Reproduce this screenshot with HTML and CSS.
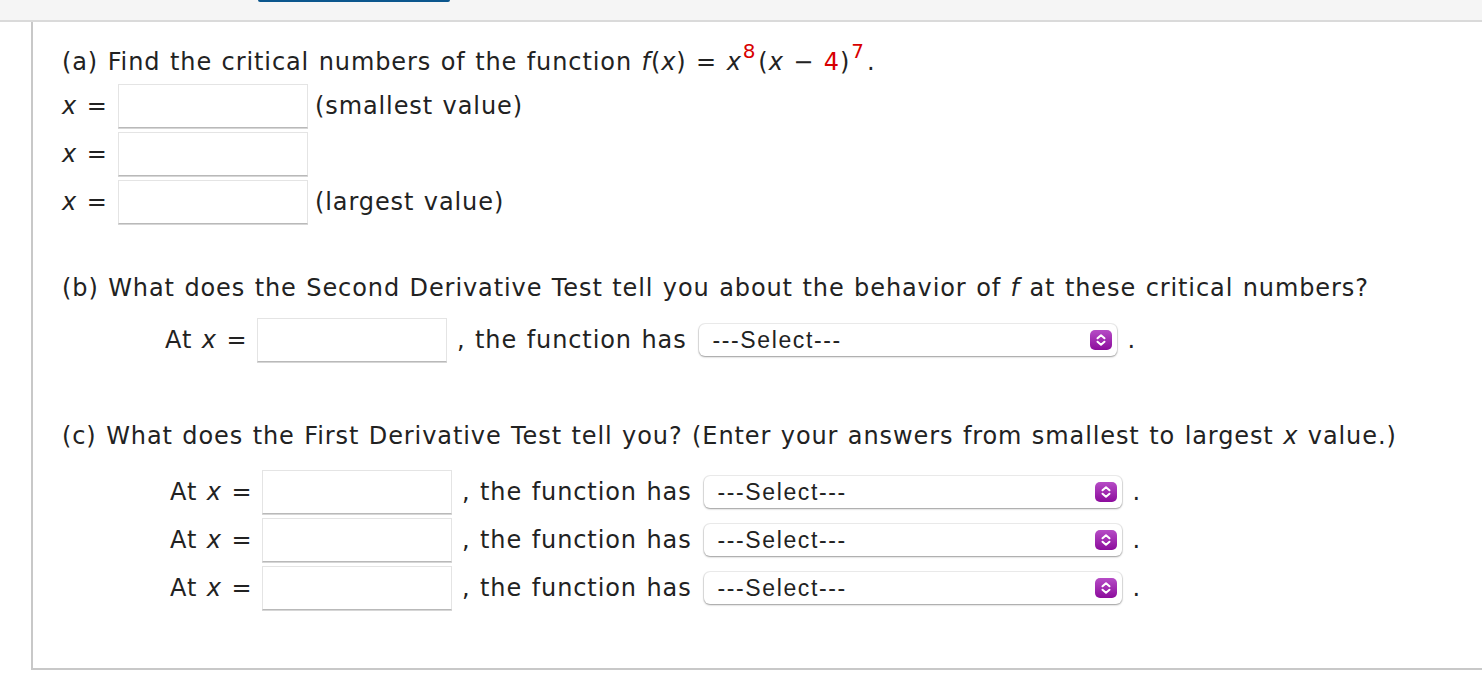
FILE: index.html
```html
<!DOCTYPE html>
<html lang="en">
<head>
<meta charset="utf-8">
<title>Critical numbers</title>
<link rel="stylesheet" href="styles.css">
</head>
<body>
<div class="topbar"><div class="tab"></div></div>
<div class="panel">
  <p class="q">(a) Find the critical numbers of the function <i>f</i>(<i>x</i>) = <i>x</i><sup class="red">8</sup>(<i>x</i> &minus; <span class="red">4</span>)<sup class="red">7</sup>.</p>
  <div class="rows-a">
    <div class="row"><span class="lbl"><i>x</i> =</span><input class="ans" type="text"><span class="note">(smallest value)</span></div>
    <div class="row"><span class="lbl"><i>x</i> =</span><input class="ans" type="text"></div>
    <div class="row"><span class="lbl"><i>x</i> =</span><input class="ans" type="text"><span class="note">(largest value)</span></div>
  </div>

  <p class="q q-b">(b) What does the Second Derivative Test tell you about the behavior of <i>f</i> at these critical numbers?</p>
  <div class="rows-b">
    <div class="row"><span class="at">At <i>x</i> =</span><input class="ans" type="text"><span class="has">, the function has</span><div class="sel"><span>---Select---</span><svg class="arr" width="22" height="20" viewBox="0 0 22 20"><defs><linearGradient id="g1" x1="0" y1="0" x2="0" y2="1"><stop offset="0" stop-color="#b64cc6"/><stop offset="1" stop-color="#8c0c9c"/></linearGradient></defs><rect x="0" y="0" width="22" height="20" rx="5" fill="url(#g1)"/><path d="M7.5 8.3 L11 5.2 L14.5 8.3 M7.5 11.7 L11 14.8 L14.5 11.7" fill="none" stroke="#fff" stroke-width="2" stroke-linecap="round" stroke-linejoin="round"/></svg></div><span class="dot">.</span></div>
  </div>

  <p class="q q-c">(c) What does the First Derivative Test tell you? (Enter your answers from smallest to largest <i>x</i> value.)</p>
  <div class="rows-c">
    <div class="row"><span class="at">At <i>x</i> =</span><input class="ans" type="text"><span class="has">, the function has</span><div class="sel"><span>---Select---</span><svg class="arr" width="22" height="20" viewBox="0 0 22 20"><rect x="0" y="0" width="22" height="20" rx="5" fill="url(#g1)"/><path d="M7.5 8.3 L11 5.2 L14.5 8.3 M7.5 11.7 L11 14.8 L14.5 11.7" fill="none" stroke="#fff" stroke-width="2" stroke-linecap="round" stroke-linejoin="round"/></svg></div><span class="dot">.</span></div>
    <div class="row"><span class="at">At <i>x</i> =</span><input class="ans" type="text"><span class="has">, the function has</span><div class="sel"><span>---Select---</span><svg class="arr" width="22" height="20" viewBox="0 0 22 20"><rect x="0" y="0" width="22" height="20" rx="5" fill="url(#g1)"/><path d="M7.5 8.3 L11 5.2 L14.5 8.3 M7.5 11.7 L11 14.8 L14.5 11.7" fill="none" stroke="#fff" stroke-width="2" stroke-linecap="round" stroke-linejoin="round"/></svg></div><span class="dot">.</span></div>
    <div class="row"><span class="at">At <i>x</i> =</span><input class="ans" type="text"><span class="has">, the function has</span><div class="sel"><span>---Select---</span><svg class="arr" width="22" height="20" viewBox="0 0 22 20"><rect x="0" y="0" width="22" height="20" rx="5" fill="url(#g1)"/><path d="M7.5 8.3 L11 5.2 L14.5 8.3 M7.5 11.7 L11 14.8 L14.5 11.7" fill="none" stroke="#fff" stroke-width="2" stroke-linecap="round" stroke-linejoin="round"/></svg></div><span class="dot">.</span></div>
  </div>
</div>
</body>
</html>
```
FILE: styles.css
```css
html, body {
  margin: 0;
  padding: 0;
  background: #ffffff;
}
body {
  font-family: "DejaVu Sans", Verdana, sans-serif;
  font-size: 24px;
  letter-spacing: 0.9px;
  word-spacing: 1px;
  color: #222222;
  overflow: hidden;
}
.topbar {
  height: 20px;
  background: #f5f5f5;
  border-bottom: 2px solid #dadada;
  display: flex;
}
.tab {
  margin-left: 258px;
  width: 192px;
  height: 2px;
  background: #0b568d;
  border-radius: 0 0 4px 4px;
}
.panel {
  margin-left: 31px;
  border-left: 2px solid #c8c8c8;
  border-bottom: 2px solid #c8c8c8;
  padding: 20px 0 58px 29px;
}
.q {
  margin: 0;
  height: 40px;
  line-height: 40px;
  white-space: nowrap;
}
.q-b { margin-top: 44px; }
.q-c { margin-top: 54px; }
.red { color: #d80000; }
sup {
  font-size: 20px;
  line-height: 0;
  vertical-align: 0;
  position: relative;
  top: -12px;
  margin: 0 2px 0 1px;
}
.rows-a {
  margin-top: 2px;
  display: flex;
  flex-direction: column;
  gap: 4px;
}
.rows-b {
  margin-top: 10px;
  padding-left: 103px;
}
.rows-c {
  margin-top: 14px;
  padding-left: 108px;
  display: flex;
  flex-direction: column;
  gap: 4px;
}
.row {
  display: flex;
  align-items: center;
  height: 44px;
  white-space: nowrap;
}
.lbl {
  width: 56px;
  flex: none;
}
.at {
  width: 92px;
  flex: none;
}
.ans {
  box-sizing: border-box;
  width: 190px;
  height: 44px;
  margin: 0;
  padding: 0 6px;
  border: 1px solid #e4e4e4;
  border-bottom: 1px solid #b9b9b9;
  box-shadow: 0 1px 0 #d6d6d6;
  background: #ffffff;
  font: inherit;
  flex: none;
}
.note {
  margin-left: 7px;
}
.has {
  margin-left: 10px;
}
.sel {
  box-sizing: border-box;
  margin-left: 12px;
  width: 418px;
  height: 32px;
  border-radius: 6px;
  background: #ffffff;
  box-shadow: 0 0 0 1px rgba(0,0,0,0.07), 0 1px 2px rgba(0,0,0,0.35);
  display: flex;
  align-items: center;
  padding: 0 5px 0 14px;
  font-family: "Liberation Sans", Arial, sans-serif;
  font-size: 23px;
  letter-spacing: 1.6px;
  color: #222222;
  flex: none;
}
.arr {
  margin-left: auto;
  flex: none;
}
.dot {
  margin-left: 11px;
}
```
